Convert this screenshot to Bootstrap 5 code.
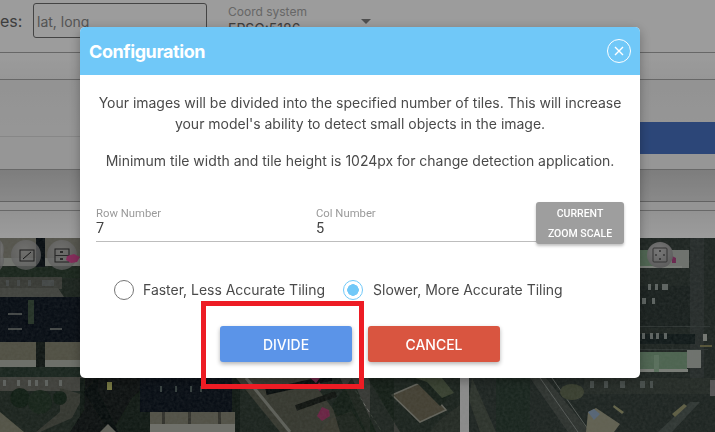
<!DOCTYPE html>
<html lang="en">
<head>
  <meta charset="UTF-8">
  <meta name="viewport" content="width=device-width, initial-scale=1.0">
  <title>Configuration</title>
  <link href="https://cdn.jsdelivr.net/npm/bootstrap@5.3.0/dist/css/bootstrap.min.css" rel="stylesheet">
  <style>
    html, body { height: 100%; overflow: hidden; }
    body { font-family: Inter, "Liberation Sans", sans-serif; background: #fff; color: #212121; }

    /* page behind the dialog */
    .bg-top { height: 53px; border-bottom: 1px solid #a8a8a8; }
    .coord-label { font-size: 16px; width: 33px; padding-top: 9px; color: #666; }
    .coord-input { width: 174px; height: 35px; margin-top: 3px; border: 1px solid #707070; border-radius: 3px; padding: 0 3px; font-size: 14px; line-height: 35px; color: #8a8a8a; }
    .crs-box { margin: 4px 0 0 21px; width: 150px; }
    .crs-label { font-size: 12px; line-height: 15px; color: #a8a8a8; }
    .crs-value { font-size: 14px; line-height: 20px; color: #666; }
    .crs-caret { width: 0; height: 0; margin: 19px 0 0 -17px; border-left: 5px solid transparent; border-right: 5px solid transparent; border-top: 5px solid #808080; }
    .bg-s2 { height: 27px; border-bottom: 1px solid #a8a8a8; background: linear-gradient(#fff, #f6f6f6); }
    .bg-s3 { height: 57px; border-bottom: 1px solid #ddd; background: linear-gradient(#f0f0f0, #f6f6f6); }
    .bg-s4 { height: 32px; background: #f6f6f6; }
    .blue-bar { position: absolute; left: 640px; right: 0; top: 122px; height: 32px; background: #4873c5; }
    .bg-s5 { height: 33px; border-top: 1px solid #aaa; border-bottom: 1px solid #a0a0a0; background: linear-gradient(#cdcdcd, #e0e0e0); }
    .bg-s6 { height: 9px; border-bottom: 1px solid #aaa; background: #f2f2f2; }
    .bg-s7 { height: 27px; background: linear-gradient(#f0f0f0, #fff); }
    .map-view { display: block; width: 715px; height: 194px; }

    .modal-backdrop.cfg-backdrop { --bs-backdrop-opacity: .39; }

    /* dialog */
    .cfg-modal { overflow: hidden; }
    .cfg-dialog { width: 560px; max-width: 560px; margin: 27px 0 0 80px; }
    .cfg-content { border: 0; border-radius: 5px; height: 351px; box-shadow: 0 3px 12px rgba(0,0,0,.3); }
    .cfg-header { height: 48px; padding: 0 9px 0 9px; background: #70c8f8; border: 0; border-radius: 5px 5px 0 0; }
    .cfg-title { font-size: 18px; font-weight: 700; color: #fff; letter-spacing: -.42px; }
    .cfg-close { width: 24px; height: 24px; padding: 0; background: none; border: 1px solid #fff; border-radius: 50%; display: flex; align-items: center; justify-content: center; }
    .cfg-body { padding: 17px 16px 16px; }
    .cfg-text { font-size: 14px; line-height: 21px; color: #4a4a4a; margin: 0 0 16px; letter-spacing: -.015px; }
    .tile-row { margin-top: 31px; height: 42px; }
    .tile-field { width: 220px; height: 40px; border-bottom: 1px solid #bdbdbd; font-family: Roboto, sans-serif; }
    .tile-label { font-size: 11.3px; line-height: 12px; padding-top: 6px; color: #9a9a9a; }
    .tile-value { font-size: 14.5px; line-height: 18px; color: #444; }
    .zoom-btn { width: 88px; height: 42px; padding: 2px 0 0; border: 0; border-radius: 3px; background: #9e9e9e; color: #fff; font-family: Roboto, sans-serif; font-size: 10.5px; font-weight: 500; line-height: 20px; box-shadow: 0 2px 3px rgba(0,0,0,.25); }
    .tiling-row { margin: 36px 0 0 18px; height: 20px; }
    .tiling-opt { font-size: 14px; line-height: 20px; color: #4a4a4a; margin-right: 18px; letter-spacing: -.02px; }
    .tiling-opt input.form-check-input { width: 20px; height: 20px; margin: 0 9px 0 0; border: 1.5px solid #757575; float: none; box-shadow: none; flex: none; }
    .tiling-opt input.form-check-input:checked { background: radial-gradient(circle, #70c8f8 0 5.5px, #fff 6px); border-color: #70c8f8; margin-right: 10px; }
    .action-row { margin-top: 26px; gap: 16px; }
    .action-btn { width: 132px; height: 36px; padding: 0; border: 0; border-radius: 3px; color: #fff; font-size: 14px; font-weight: 500; box-shadow: 0 2px 4px rgba(0,0,0,.3); }
    .btn-divide { background: #5b94e8; }
    .btn-cancel { background: #d95540; }

    /* annotation drawn over the screenshot */
    .red-frame { position: absolute; z-index: 2000; left: 201px; top: 301px; width: 163px; height: 88px; border: 5px solid #ed1c24; }
  </style>
</head>
<body>
  <div>
    <div class="bg-top d-flex">
      <div class="coord-label">es:</div>
      <div class="coord-input">lat, long</div>
      <div class="crs-box">
        <div class="crs-label">Coord system</div>
        <div class="crs-value">EPSG:5186</div>
      </div>
      <div class="crs-caret"></div>
    </div>
    <div class="bg-s2"></div>
    <div class="bg-s3"></div>
    <div class="bg-s4"></div>
    <div class="blue-bar"></div>
    <div class="bg-s5"></div>
    <div class="bg-s6"></div>
    <div class="bg-s7"></div>

    <svg class="map-view" viewBox="0 238 715 194" xmlns="http://www.w3.org/2000/svg">
      <defs>
        <filter id="grain" x="0" y="0" width="100%" height="100%">
          <feTurbulence type="fractalNoise" baseFrequency=".35" numOctaves="2" seed="4"/>
          <feColorMatrix values="0 0 0 0 .5  0 0 0 0 .55  0 0 0 0 .5  .9 .9 0 0 -.55"/>
        </filter>
        <filter id="soft"><feGaussianBlur stdDeviation=".6"/></filter>
        <radialGradient id="knob" cx=".45" cy=".35" r=".8">
          <stop offset="0" stop-color="#c4c4c4"/><stop offset="1" stop-color="#8e8e8e"/>
        </radialGradient>
      </defs>
      <g filter="url(#soft)">
        <!-- left pane -->
        <rect x="0" y="238" width="460" height="194" fill="#2d3a31"/>
        <rect x="0" y="238" width="80" height="28" fill="#8d8c7f"/>
        <rect x="36" y="238" width="9" height="30" fill="#10181c"/>
        <rect x="0" y="258" width="36" height="8" fill="#b9bdb4"/>
        <rect x="45" y="258" width="35" height="8" fill="#b9bdb4"/>
        <rect x="0" y="267" width="80" height="11" fill="#2b3d2f"/>
        <rect x="0" y="277" width="62" height="12" fill="#5d6159"/>
        <path d="M0 288H58L64 297H0Z" fill="#6d7067"/>
        <rect x="0" y="297" width="80" height="46" fill="#0e1620"/>
        <rect x="28" y="300" width="6" height="24" fill="#3d5340"/>
        <g fill="#6f7674">
          <rect x="6" y="280" width="3" height="6"/><rect x="17" y="280" width="3" height="6"/><rect x="28" y="280" width="3" height="6"/><rect x="42" y="280" width="12" height="6"/>
          <rect x="8" y="313" width="14" height="2"/><rect x="8" y="328" width="14" height="2"/><rect x="50" y="328" width="12" height="2"/>
        </g>
        <rect x="0" y="342" width="37" height="18" fill="#85846f"/>
        <rect x="45" y="342" width="35" height="18" fill="#85846f"/>
        <rect x="0" y="360" width="36" height="7" fill="#b3b7ad"/>
        <rect x="45" y="360" width="35" height="7" fill="#b3b7ad"/>
        <rect x="36" y="342" width="9" height="25" fill="#1b2522"/>
        <rect x="0" y="367" width="80" height="11" fill="#2c3d30"/>
        <rect x="0" y="377" width="84" height="14" fill="#696b62"/>
        <path d="M60 388L84 395L72 418L40 432H36L60 412Z" fill="#565a50"/>
        <g fill="#9aa09a">
          <rect x="3" y="380" width="3" height="6"/><rect x="17" y="380" width="3" height="6"/><rect x="28" y="380" width="3" height="6"/><rect x="35" y="380" width="3" height="6"/><rect x="45" y="380" width="3" height="6"/><rect x="59" y="380" width="3" height="6"/>
        </g>
        <circle cx="20" cy="398" r="10" fill="#1f3023"/><circle cx="40" cy="402" r="12" fill="#263a2a"/><circle cx="60" cy="398" r="7" fill="#1f3023"/>
        <path d="M0 412L24 432H0Z" fill="#8a8a74"/>
        <rect x="80" y="378" width="160" height="54" fill="#1c2b20"/>
        <path d="M85 378H140L150 382L132 398L112 432H70L84 410Z" fill="#141e1a"/>
        <path d="M97 378L84 392L110 432H118L98 392Z" fill="#0b1218"/>
        <rect x="107" y="382" width="5" height="8" fill="#c2c46a"/>
        <rect x="140" y="378" width="92" height="34" fill="#0c1420"/>
        <g fill="#5a6a68">
          <rect x="160" y="386" width="2" height="6"/><rect x="175" y="386" width="2" height="6"/><rect x="190" y="386" width="2" height="6"/><rect x="200" y="386" width="2" height="6"/>
        </g>
        <rect x="150" y="412" width="85" height="20" fill="#878674"/>
        <rect x="150" y="424" width="85" height="8" fill="#b5b7ad"/>
        <g fill="#53534a"><rect x="162" y="412" width="3" height="12"/><rect x="188" y="412" width="3" height="12"/><rect x="218" y="412" width="3" height="12"/></g>
        <path d="M100 432L108 424L116 432Z" fill="#9a9a8e"/>
        <path d="M236 378H265L310 378L350 432H280Z" fill="#5a5d4f"/>
        <path d="M246 378L290 432" stroke="#9a9d92" stroke-width="3" fill="none"/>
        <path d="M266 392L330 378H332" stroke="#101615" stroke-width="6" fill="none"/>
        <path d="M296 408L336 394" stroke="#1b201c" stroke-width="6" fill="none"/>
        <path d="M332 418L352 411L364 432H320Z" fill="#5f5e50"/>
        <path d="M319 382l4 5-3 4-4-3z" fill="#b03a70"/>
        <path d="M322 407l7 3 1 6-8 5-5-5z" fill="#b03a70"/>
        <path d="M310 378h10l-4 5z" fill="#b03a70"/>
        <path d="M340 378L366 432H400L368 378Z" fill="#5a5d57"/>
        <path d="M352 385L382 432" stroke="#b4b6ac" stroke-width="1" stroke-dasharray="4 3" fill="none"/>
        <path d="M352 378L376 432L340 432L332 405Z" fill="#1e3022" opacity=".7"/>
        <path d="M392 395L422 382L446 410L420 422Z" fill="#6f6a55" stroke="#a3a395" stroke-width="1.5"/>
        <path d="M400 378H432L450 396L440 406L418 384Z" fill="#26362a"/>
        <path d="M415 378h27l12 15-12 5-15-16z" fill="#5b6a50"/>
        <path d="M440 420L460 405V432H430Z" fill="#3d463c"/>
        <rect x="370" y="378" width="24" height="54" fill="#1d2f22" opacity=".6"/>
        <!-- divider -->
        <rect x="460" y="238" width="9" height="194" fill="#e6e6e6"/>
        <!-- right pane -->
        <rect x="469" y="238" width="246" height="194" fill="#323d38"/>
        <path d="M472 378L496 432H480L469 400Z" fill="#4c5449"/>
        <path d="M530 378L568 432H590L546 378Z" fill="#4e5550"/>
        <path d="M540 378L578 432" stroke="#8c948e" stroke-width="1" fill="none"/>
        <path d="M552 378L590 432" stroke="#8c948e" stroke-width="1" fill="none"/>
        <rect x="496" y="378" width="34" height="54" fill="#2a3c30"/>
        <ellipse cx="572" cy="392" rx="12" ry="8" fill="#5f6850"/>
        <path d="M588 412L596 408L620 424L614 432H586Z" fill="#a09f86"/>
        <path d="M588 412l6-3 6 5-6 6z" fill="#8fa7c4"/>
        <rect x="584" y="378" width="131" height="16" fill="#3d4741"/>
        <g fill="#74807c"><rect x="590" y="381" width="4" height="7"/><rect x="604" y="381" width="4" height="7"/><rect x="620" y="381" width="5" height="7"/><rect x="640" y="381" width="5" height="7"/><rect x="650" y="381" width="3" height="7"/></g>
        <path d="M658 432L690 402H700L672 432Z" fill="#4f5a55"/>
        <path d="M672 414l12-10 3 2-12 11z" fill="#9c9b70"/>
        <path d="M614 405l10 7-2 2-9-7z" fill="#a5a578"/>
        <rect x="710" y="380" width="5" height="16" fill="#8c8a8c"/>

        <!-- right pane top, next to the dialog -->
        <rect x="640" y="250" width="26" height="18" fill="#7fa584"/>
        <rect x="665" y="250" width="24" height="18" fill="#b6bcb4"/>
        <path d="M672 256l4 2 0 5-4 0z" fill="#b03a80"/>
        <rect x="640" y="266" width="42" height="2" fill="#c7cdc4"/>
        <rect x="690" y="238" width="14" height="140" fill="#3f4a46"/>
        <rect x="640" y="286" width="50" height="42" fill="#2a3431"/>
        <rect x="640" y="326" width="70" height="1" fill="#4c5652"/>
        <rect x="640" y="334" width="55" height="10" fill="#1e2a2c"/>
        <rect x="640" y="349" width="68" height="1" fill="#4c5652"/>
        <g fill="#9aa4a0"><rect x="648" y="284" width="3" height="6"/><rect x="655" y="284" width="3" height="6"/><rect x="662" y="284" width="6" height="6"/><rect x="642" y="298" width="4" height="6"/><rect x="652" y="298" width="3" height="6"/><rect x="642" y="333" width="3" height="6"/><rect x="650" y="333" width="3" height="6"/><rect x="656" y="333" width="3" height="6"/><rect x="664" y="333" width="3" height="6"/></g>
        <rect x="640" y="352" width="47" height="18" fill="#7fa584"/>
        <rect x="687" y="350" width="14" height="18" fill="#b6bcb4"/>
        <rect x="640" y="369" width="48" height="3" fill="#c7cdc4"/>
        <rect x="654" y="355" width="5" height="17" fill="#94b898"/>
        <rect x="703" y="334" width="4" height="7" fill="#c0c4bd"/>
        <rect x="700" y="345" width="12" height="2" fill="#8e8a5c"/>
      </g>
      <rect x="0" y="238" width="715" height="194" filter="url(#grain)" opacity=".18"/>

      <!-- map handles -->
      <path d="M0 240a15 15 0 0 1 3 15a15 15 0 0 1-3 15Z" fill="url(#knob)" opacity=".8"/>
      <circle cx="26" cy="255" r="15" fill="url(#knob)" opacity=".75"/>
      <rect x="20" y="250" width="14" height="11" fill="none" stroke="#333" stroke-width="1"/>
      <path d="M23 259L31 252" stroke="#222" stroke-width="1" fill="none"/>
      <circle cx="62" cy="255" r="15" fill="url(#knob)" opacity=".75"/>
      <rect x="55" y="249" width="14" height="13" fill="none" stroke="#333" stroke-width="1"/>
      <path d="M55 255.500H69" stroke="#444" stroke-width="1" fill="none"/>
      <path d="M60 252h3M60 259h3" stroke="#222" stroke-width="1.500" fill="none"/>
      <path d="M67 256l7-2 6 3-3 5-6 1-5-3z" fill="#d84a94"/>
      <circle cx="660" cy="255" r="13" fill="url(#knob)"/>
      <rect x="653" y="248" width="14" height="14" rx="1" fill="none" stroke="#555" stroke-width="1"/>
      <path d="M660 250v2M660 258v2M655 255h2M663 255h2" stroke="#333" stroke-width="1.200" fill="none"/>
    </svg>
  </div>

  <div class="modal-backdrop show cfg-backdrop"></div>

  <div class="modal d-block cfg-modal" tabindex="-1">
    <div class="modal-dialog cfg-dialog">
      <div class="modal-content cfg-content">
        <div class="modal-header cfg-header d-flex justify-content-between align-items-center">
          <h5 class="modal-title cfg-title">Configuration</h5>
          <button type="button" class="cfg-close" aria-label="Close">
            <svg width="10" height="10" viewBox="0 0 10 10"><path d="M1 1L9 9M9 1L1 9" stroke="#fff" stroke-width="1.400" fill="none"/></svg>
          </button>
        </div>
        <div class="modal-body cfg-body">
          <p class="cfg-text text-center">Your images will be divided into the specified number of tiles. This will increase your model's ability to detect small objects in the image.</p>
          <p class="cfg-text text-center">Minimum tile width and tile height is 1024px for change detection application.</p>
          <div class="tile-row d-flex">
            <div class="tile-field">
              <div class="tile-label">Row Number</div>
              <div class="tile-value">7</div>
            </div>
            <div class="tile-field">
              <div class="tile-label">Col Number</div>
              <div class="tile-value">5</div>
            </div>
            <button type="button" class="zoom-btn">CURRENT<br>ZOOM SCALE</button>
          </div>
          <div class="tiling-row d-flex">
            <label class="tiling-opt d-flex align-items-center">
              <input class="form-check-input" type="radio" name="tiling">Faster, Less Accurate Tiling
            </label>
            <label class="tiling-opt d-flex align-items-center">
              <input class="form-check-input" type="radio" name="tiling" checked>Slower, More Accurate Tiling
            </label>
          </div>
          <div class="action-row d-flex justify-content-center">
            <button type="button" class="action-btn btn-divide">DIVIDE</button>
            <button type="button" class="action-btn btn-cancel">CANCEL</button>
          </div>
        </div>
      </div>
    </div>
  </div>

  <div class="red-frame"></div>

  <script src="https://cdn.jsdelivr.net/npm/bootstrap@5.3.0/dist/js/bootstrap.bundle.min.js"></script>
</body>
</html>
